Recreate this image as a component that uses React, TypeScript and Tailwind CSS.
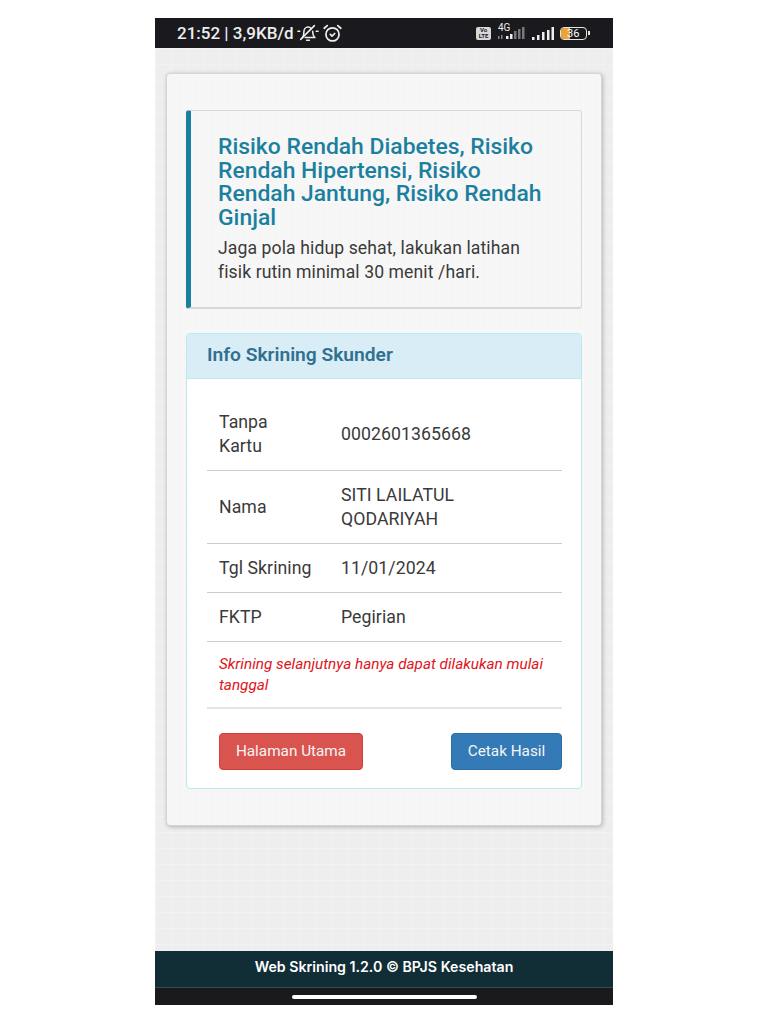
const rows = [
  { label: 'Tanpa\nKartu', value: '0002601365668', height: 'h-[73px]' },
  { label: 'Nama', value: 'SITI LAILATUL QODARIYAH', height: 'h-[73px]' },
  { label: 'Tgl Skrining', value: '11/01/2024', height: 'h-[49px]' },
  { label: 'FKTP', value: 'Pegirian', height: 'h-[49px]' },
];

function StatusBar() {
  return (
    <div className="h-[30px] bg-[#1a1a1e] flex items-center justify-between pl-[22px] pr-[23px] text-[#eeeeee]">
      <div className="flex items-center text-[17px] leading-none font-medium">
        <span>21:52 | 3,9KB/d</span>
        {/* bell off */}
        <svg className="w-[22px] h-[22px] ml-[3px]" viewBox="0 0 24 24" fill="none" stroke="currentColor" strokeWidth={1.7} strokeLinecap="round" strokeLinejoin="round">
          <path d="M6 17c1.500-1.500 1.500-3 1.500-6 0-3 2-5.500 4.500-5.500 1.500 0 2.700.6 3.500 1.700" />
          <path d="M17 10c0 3 .5 5 2.500 7H9" />
          <path d="M10.500 20h3" />
          <path d="M4 19 19 4" />
          <path d="M1 10h2M21 10h2" />
        </svg>
        {/* alarm clock */}
        <svg className="w-[21px] h-[21px] ml-[3px]" viewBox="0 0 24 24" fill="none" stroke="currentColor" strokeWidth={2} strokeLinecap="round" strokeLinejoin="round">
          <circle cx="12" cy="13" r="7.500" />
          <path d="M9.500 13l2 2 3-3" />
          <path d="M2.500 6 6 3M21.500 6 18 3" />
        </svg>
      </div>
      <div className="flex items-center">
        <div className="w-[15px] h-[13px] bg-[#d8d8d8] rounded-[2px] text-[#1a1a1e] text-[6px] leading-[6px] font-bold text-center flex flex-col justify-center">
          <span>Vo</span>
          <span>LTE</span>
        </div>
        <div className="relative w-[27px] h-[15px] ml-[7px]">
          <span className="absolute left-0 top-[-3px] text-[10px] leading-none">4G</span>
          <svg className="absolute inset-0 w-[27px] h-[15px]" viewBox="0 0 27 15" fill="currentColor">
            <rect x="0" y="10" width="1.500" height="3" opacity="0.5" />
            <rect x="3" y="9" width="1.500" height="4" opacity="0.5" />
            <rect x="8" y="10" width="2.500" height="3" />
            <rect x="12" y="8" width="2.500" height="5" />
            <rect x="16" y="5" width="2.500" height="8" opacity="0.45" />
            <rect x="20" y="3" width="2.500" height="10" opacity="0.45" />
            <rect x="24" y="1" width="2.500" height="12" opacity="0.45" />
          </svg>
        </div>
        <svg className="w-[22px] h-[13px] ml-[7px]" viewBox="0 0 22 13" fill="currentColor">
          <rect x="0" y="10" width="2.500" height="3" />
          <rect x="5" y="8" width="2.500" height="5" />
          <rect x="10" y="5" width="2.500" height="8" />
          <rect x="15" y="3" width="2.500" height="10" />
          <rect x="19.500" y="0" width="2.500" height="13" />
        </svg>
        <div className="relative w-[27px] h-[13px] ml-[6px] rounded-[4px] border border-[#e5e5e5] flex items-center overflow-hidden">
          <div className="w-[9px] h-full bg-[#e8a33a]" />
          <span className="absolute left-[6px] top-0 text-[11px] leading-[11px] text-white">36</span>
        </div>
        <div className="w-[2px] h-[4px] bg-[#e5e5e5] ml-[1px]" />
      </div>
    </div>
  );
}

export default function App() {
  return (
    <div className="min-h-[1024px] bg-white pt-[18px] font-['Roboto',sans-serif]">
      <div className="w-[458px] ml-[155px]">
        <StatusBar />

        <div className="h-[903px] pt-[25px] px-[11px] bg-[#eeeeee] bg-[linear-gradient(rgba(255,255,255,0.25)_1px,transparent_1px),linear-gradient(90deg,rgba(255,255,255,0.25)_1px,transparent_1px)] bg-[length:16px_16px]">
          <div className="bg-[#f6f6f6] bg-[linear-gradient(rgba(255,255,255,0.25)_1px,transparent_1px),linear-gradient(90deg,rgba(255,255,255,0.25)_1px,transparent_1px)] bg-[length:16px_16px] border border-[#d4d4d4] rounded-[4px] shadow-[1px_1px_4px_rgba(0,0,0,0.25)] px-[19px] pt-[36px] pb-[36px]">
            <div className="h-[199px] border border-[#d8d8d8] border-b-2 border-l-[5px] border-l-[#1b809e] rounded-[3px] pl-[27px] pr-[30px] pt-[24px]">
              <h4 className="text-[22.900px] leading-[23.700px] font-medium text-[#1b809e]">
                Risiko Rendah Diabetes, Risiko Rendah Hipertensi, Risiko Rendah Jantung, Risiko Rendah Ginjal
              </h4>
              <p className="mt-[6px] text-[17.600px] leading-[24px] tracking-[0.1px] text-[#3a3a3a]">
                Jaga pola hidup sehat, lakukan latihan fisik rutin minimal 30 menit /hari.
              </p>
            </div>

            <div className="mt-[24px] bg-white border border-[#bce8f1] rounded-[4px]">
              <div className="h-[45px] bg-[#d9edf7] border-b border-[#bce8f1] flex items-center pl-[20px] pb-[2px] rounded-t-[3px]">
                <h3 className="text-[19.200px] font-semibold text-[#31708f]">Info Skrining Skunder</h3>
              </div>

              <div className="pl-[20px] pr-[19px] pt-[19px] pb-[18px]">
                {rows.map((row) => (
                  <div key={row.label} className={`${row.height} flex items-center border-b border-[#cccccc] text-[17.700px] leading-[24px] tracking-[0.05px] text-[#3a3a3a]`}>
                    <div className="w-[134px] pl-[12px] whitespace-pre-line">{row.label}</div>
                    <div className="flex-1 pr-[60px]">{row.value}</div>
                  </div>
                ))}

                <div className="h-[67px] flex items-center px-[12px] border-b-2 border-[#e5e5e5] text-[15.300px] leading-[21px] italic text-[#e0141c]">
                  Skrining selanjutnya hanya dapat dilakukan mulai tanggal
                </div>

                <div className="mt-[24px] pl-[12px] flex items-center justify-between">
                  <button className="w-[144px] h-[37px] rounded-[4px] bg-[#d9534f] border border-[#d43f3a] text-[15.300px] text-[#f5f5f5]">Halaman Utama</button>
                  <button className="w-[111px] h-[37px] rounded-[4px] bg-[#337ab7] border border-[#2e6da4] text-[15.300px] text-[#f5f5f5]">Cetak Hasil</button>
                </div>
              </div>
            </div>
          </div>
        </div>

        <div className="h-[37px] bg-[#112d36] border-b border-[#3a4a50] flex items-center justify-center pb-[5px] text-white text-[14.200px] font-semibold font-['Inter',sans-serif]">
          Web Skrining 1.2.0 © BPJS Kesehatan
        </div>
        <div className="h-[17px] bg-[#1a1a1e] flex justify-center pt-[7px]">
          <div className="w-[185px] h-[4px] rounded-full bg-white" />
        </div>
      </div>
    </div>
  );
}
